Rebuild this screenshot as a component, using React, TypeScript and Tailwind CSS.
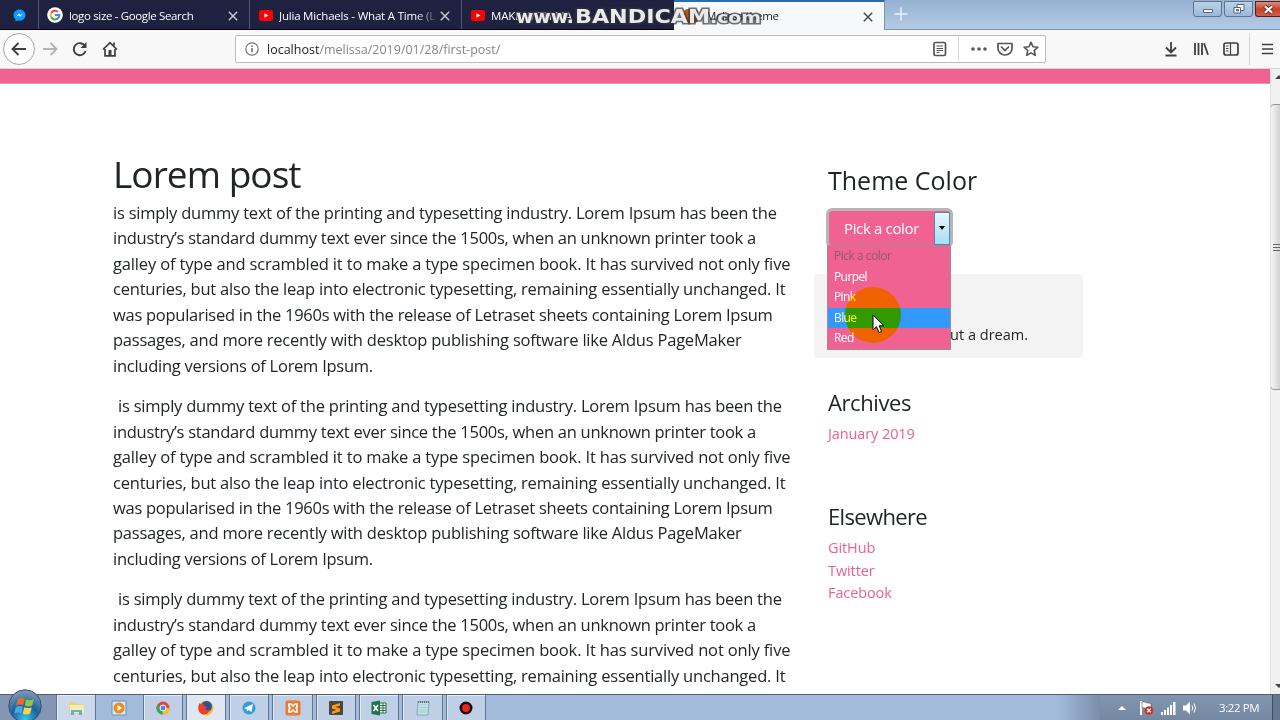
import type { ReactNode } from 'react'
import clsx from 'clsx'

const paragraph = [
  { text: 'is simply dummy text of the printing and typesetting industry. Lorem Ipsum has been the', tracking: 'tracking-[-0.223px]' },
  { text: 'industry’s standard dummy text ever since the 1500s, when an unknown printer took a', tracking: 'tracking-[-0.272px]' },
  { text: 'galley of type and scrambled it to make a type specimen book. It has survived not only five', tracking: 'tracking-[-0.157px]' },
  { text: 'centuries, but also the leap into electronic typesetting, remaining essentially unchanged. It', tracking: 'tracking-[-0.213px]' },
  { text: 'was popularised in the 1960s with the release of Letraset sheets containing Lorem Ipsum', tracking: 'tracking-[-0.270px]' },
  { text: 'passages, and more recently with desktop publishing software like Aldus PageMaker', tracking: 'tracking-[-0.220px]' },
  { text: 'including versions of Lorem Ipsum.', tracking: 'tracking-[-0.260px]' },
]

const options = ['Purpel', 'Pink', 'Blue', 'Red']

function YoutubeIcon() {
  return (
    <svg width="14" height="11" viewBox="0 0 14 11" className="mt-0.5 shrink-0">
      <rect width="14" height="11" rx="2.5" fill="#f00" />
      <path d="M5.4 3.2v4.6l4-2.3z" fill="#fff" />
    </svg>
  )
}

function GoogleIcon() {
  return (
    <svg width="16" height="16" viewBox="0 0 16 16" className="mt-px shrink-0">
      <circle cx="8" cy="8" r="7.8" fill="#fff" />
      <g fill="none" strokeWidth="2">
        <path d="M4.2 5.8A4.4 4.4 0 0 1 11 4.9" stroke="#ea4335" />
        <path d="M4.2 10.2a4.6 4.6 0 0 1 0-4.4" stroke="#fbbc05" />
        <path d="M11 11.3a4.4 4.4 0 0 1-6.8-1.1" stroke="#34a853" />
        <path d="M8 8h4.4a4.4 4.4 0 0 1-1.4 3.3" stroke="#4285f4" />
      </g>
    </svg>
  )
}

function MessengerIcon() {
  return (
    <svg width="13" height="13" viewBox="0 0 13 13">
      <path d="M6.5.4C3 .4.5 2.9.5 6c0 1.8.8 3.3 2 4.3v2.300l2-1.100c.6.2 1.300.3 2 .3 3.500 0 6-2.500 6-5.700S10 .4 6.500.4z" fill="#0a9cff" />
      <path d="M2.900 7.700 5.900 4.600l1.500 1.500 2.700-1.500L7.200 7.700 5.600 6.200z" fill="#fff" />
    </svg>
  )
}

function CloseIcon({ className }: { className?: string }) {
  return (
    <svg width="10" height="10" viewBox="0 0 10 10" className={clsx('mt-0.5 shrink-0', className)}>
      <path d="M.8.8l8.400 8.400M9.200.8L.8 9.200" stroke="currentColor" strokeWidth="1.400" fill="none" />
    </svg>
  )
}

function Tab({ icon, title, className }: { icon: ReactNode; title: string; className: string }) {
  return (
    <div className={clsx('flex items-center border-r border-[#4f5478] pr-[11px] text-white', className)}>
      {icon}
      <span className="mt-0.5 ml-1.5 flex-1 text-[11.5px] tracking-[-0.35px] whitespace-nowrap">{title}</span>
      <CloseIcon className="text-[#c9cad6]" />
    </div>
  )
}

function TabBar() {
  return (
    <div className="relative flex h-[30px] bg-linear-to-b from-[#96b1d1] to-[#b4cce6]">
      <div className="flex w-[674px] border-b border-black bg-[#1e2140]">
        <div className="flex w-[39px] items-center justify-center border-r border-[#4f5478] pt-0.5">
          <MessengerIcon />
        </div>
        <Tab icon={<GoogleIcon />} title="logo size - Google Search" className="w-[211px] pl-2" />
        <Tab
          icon={<YoutubeIcon />}
          title="Julia Michaels - What A Time (L"
          className="w-[212px] pl-[9px] [&>span]:mask-r-from-85% [&>span]:tracking-[-0.2px]"
        />
        <div className="flex flex-1 items-center pl-[9px] text-white">
          <YoutubeIcon />
          <span className="mt-0.5 ml-1.5 text-[11.5px] tracking-[-0.2px] whitespace-nowrap">MAKE WITH MA</span>
        </div>
      </div>
      <div className="flex w-[211px] items-center border-t-2 border-r border-t-[#2b6cb5] border-r-[#7d93b0] bg-[#f7f8f9] pr-[11px] pl-2.5">
        <div className="size-3.5 rounded bg-[#b5561c]" />
        <span className="ml-2 flex-1 text-[11.5px] tracking-[-0.4px] text-[#222]">Melissa theme</span>
        <CloseIcon className="mt-0 text-[#444]" />
      </div>
      <div className="flex flex-1 border-b border-[#7f93ac]">
        <svg width="14" height="14" viewBox="0 0 14 14" className="mt-[7px] ml-[9px]">
          <path d="M7 .5v13M.5 7h13" stroke="#e8f1fa" strokeWidth="1.500" />
        </svg>
        <WindowButtons />
      </div>
      <Watermark />
    </div>
  )
}

function WindowButtons() {
  return (
    <div className="ml-auto flex gap-[2px] overflow-hidden pt-px">
      <div className="flex h-4 w-[29px] items-center justify-center rounded-b-[3px] border border-[#5c7391] bg-linear-to-b from-[#bdd1e8] to-[#9bb8d8]">
        <div className="mt-1 h-[4px] w-[10px] rounded-[1px] border border-[#56657a] bg-white" />
      </div>
      <div className="flex h-4 w-[29px] items-center justify-center rounded-b-[3px] border border-[#5c7391] bg-linear-to-b from-[#bdd1e8] to-[#9bb8d8]">
        <svg width="12" height="10" viewBox="0 0 12 10">
          <path d="M4 .5h7v6H4z" fill="#fff" stroke="#56657a" />
          <path d="M1 3.500h6.500v5.500H1z" fill="#fff" stroke="#56657a" />
          <path d="M3.500 5.500h2v1.500h-2z" fill="#9bb8d8" stroke="#56657a" />
        </svg>
      </div>
      <div className="flex h-4 w-[25px] items-center justify-center rounded-bl-[3px] border border-r-0 border-[#5a1d18] bg-linear-to-b from-[#dc8b7d] via-[#c7432b] to-[#cf5f43]">
        <svg width="11" height="9" viewBox="0 0 11 9">
          <path d="M1.500 1 9.500 8M9.500 1 1.500 8" stroke="#59302e" strokeWidth="3.800" />
          <path d="M1.800 1.200 9.200 7.800M9.200 1.200 1.800 7.800" stroke="#fff" strokeWidth="2.200" />
        </svg>
      </div>
    </div>
  )
}

// Recorder watermark, drawn over the tabs
function Watermark() {
  return (
    <svg width="260" height="30" className="absolute top-0 left-[510px]">
      <g
        fontFamily="'DejaVu Sans', sans-serif"
        fontWeight="bold"
        fill="#e9e9eb"
        stroke="#33353b"
        strokeWidth="3"
        strokeOpacity=".7"
        paintOrder="stroke"
      >
        <text x="6" y="22.500" fontSize="18" textLength="58" lengthAdjust="spacingAndGlyphs">www.</text>
        <text x="65" y="22.500" fontSize="19" textLength="135" lengthAdjust="spacingAndGlyphs">BANDICAM</text>
        <text x="200" y="22.500" fontSize="16" textLength="51" lengthAdjust="spacingAndGlyphs">.com</text>
      </g>
    </svg>
  )
}

function Toolbar() {
  return (
    <div className="flex h-[39px] items-center border-b border-[#d5d5d5] bg-[#f8f8f9] text-[#3f3f42]">
      <div className="ml-[3px] flex size-8 shrink-0 items-center justify-center rounded-full border border-[#a9a9ab] bg-[#fdfdfd]">
        <svg width="16" height="14" viewBox="0 0 16 14" fill="none" stroke="currentColor" strokeWidth="1.900">
          <path d="M15 7H2M7.500 1 1.500 7l6 6" />
        </svg>
      </div>
      <svg width="16" height="14" viewBox="0 0 16 14" fill="none" stroke="#b3b3b5" strokeWidth="1.800" className="ml-[7px]">
        <path d="M1 7h13M8.500 1l6 6-6 6" />
      </svg>
      <svg width="16" height="16" viewBox="0 0 16 16" fill="none" stroke="currentColor" strokeWidth="1.900" className="ml-3.5">
        <path d="M13 5.200A6 6 0 1 0 13.500 10" />
        <path d="M14.500 1v6H8.500z" fill="currentColor" stroke="none" />
      </svg>
      <svg width="16" height="16" viewBox="0 0 16 16" fill="none" stroke="currentColor" strokeWidth="1.700" className="ml-3.5">
        <path d="M1 8.500 8 1.600l7 6.900M3 8v6.800h10V8M12 1.500v3" />
        <path d="M6.500 9h3v6h-3z" fill="currentColor" stroke="none" />
      </svg>
      <div className="ml-[117px] flex h-7 w-[811px] items-center rounded-[2px] border border-[#bcbcbc] bg-white">
        <svg width="14" height="14" viewBox="0 0 14 14" fill="none" stroke="#737375" strokeWidth="1.200" className="ml-[9px]">
          <circle cx="7" cy="7" r="6.200" />
          <path d="M7 6v4.200M7 3.500v1.400" strokeWidth="1.600" />
        </svg>
        <div className="mt-0.5 ml-2 text-[12.5px] text-[#858587]">
          <span className="text-[#222]">localhost</span>/melissa/2019/01/28/first-post/
        </div>
        <svg width="14" height="16" viewBox="0 0 14 16" fill="none" stroke="#555" className="ml-auto">
          <rect x="1" y="1.500" width="11.500" height="13" rx="1.500" strokeWidth="1.700" />
          <path d="M3.500 5h6.500M3.500 7.500h6.500M3.500 9.500h6.500M3.500 11.500h3" />
        </svg>
        <div className="ml-[11px] h-6 w-px bg-[#d8d8d8]" />
        <svg width="16" height="4" viewBox="0 0 16 4" fill="#555" className="ml-3">
          <circle cx="2" cy="2" r="1.800" />
          <circle cx="8" cy="2" r="1.800" />
          <circle cx="14" cy="2" r="1.800" />
        </svg>
        <svg width="16" height="14" viewBox="0 0 16 14" fill="none" stroke="#555" strokeWidth="1.700" className="ml-2.5">
          <path d="M1 1.500h14V6.500a7 6.500 0 0 1-14 0z" strokeLinejoin="round" />
          <path d="M4.500 5 8 8.500 11.500 5" strokeLinecap="round" />
        </svg>
        <svg width="16" height="16" viewBox="0 0 16 16" fill="none" stroke="#555" strokeWidth="1.600" strokeLinejoin="round" className="mr-[6px] ml-[10px]">
          <path d="M8 1.200l2 4.500 4.900.5-3.700 3.300 1.100 4.900L8 11.900l-4.300 2.500 1.100-4.900L1.100 6.200 6 5.700z" />
        </svg>
      </div>
      <svg width="14" height="16" viewBox="0 0 14 16" fill="none" stroke="currentColor" strokeWidth="1.800" className="ml-[118px]">
        <path d="M7 1v10M2 6.500l5 5 5-5M1.500 14.500h11" />
      </svg>
      <svg width="16" height="14" viewBox="0 0 16 14" fill="none" stroke="currentColor" strokeWidth="1.800" className="ml-[15px]">
        <path d="M2 1v12M5.500 1v12M9 1v12M11 1.200l4 11.600" />
      </svg>
      <svg width="16" height="14" viewBox="0 0 16 14" fill="none" stroke="currentColor" strokeWidth="1.700" className="ml-3.5">
        <rect x="1" y="1" width="14" height="12" rx="2" />
        <path d="M7.500 1v12M3 4h2.500M3 6.500h2.500M3 9h2.500" strokeWidth="1.200" />
      </svg>
      <div className="ml-[10px] h-8 w-px bg-[#d5d5d7]" />
      <svg width="12" height="12" viewBox="0 0 12 12" fill="none" stroke="currentColor" strokeWidth="1.700" className="ml-3">
        <path d="M0 1.500h11M0 6h11M0 10.500h11" />
      </svg>
    </div>
  )
}

function Post() {
  return (
    <article className="ml-[113px] w-[715px] pt-[67px] text-[#212529]">
      <h1 className="mb-[3px] text-[37px] leading-[46px] tracking-[-0.95px]">Lorem post</h1>
      {[0, 1, 2].map((n) => (
        <p key={n} className={clsx('mb-[15px] text-[16.5px] leading-[25.450px] whitespace-nowrap', n > 0 && 'first-line:indent-1')}>
          {paragraph.map((line, i) => (
            <span key={line.text} className={clsx('block', line.tracking, n > 0 && i === 0 && 'pl-[5px]')}>
              {line.text}
            </span>
          ))}
        </p>
      ))}
    </article>
  )
}

function ColorPicker() {
  return (
    <div className="relative mt-3 ml-[-2px] w-[127px]">
      <div className="flex h-10 items-center rounded-[6px] border-[3px] border-[#b9b4b7] bg-[#f06292] text-[15px] text-white">
        <span className="ml-[15px] flex-1 tracking-[-0.35px] whitespace-nowrap">Pick a color</span>
        <div className="flex h-[33px] w-4 items-center justify-center border border-[#4d8ca9] bg-linear-to-b from-[#eaf6fd] to-[#aadcf3]">
          <div className="border-x-[3.500px] border-t-4 border-x-transparent border-t-black" />
        </div>
      </div>
      <ul className="absolute top-[37px] left-px z-10 w-[124px] border border-[#a58a95] bg-[#f06292] text-[12px] leading-[20.600px] font-medium tracking-[-0.6px] text-white">
        <li className="pl-1.5 font-normal tracking-[-0.5px] text-[#8f5a6c]">Pick a color</li>
        {options.map((name) => (
          <li key={name} className={clsx('pl-1.5', name === 'Blue' && 'bg-[#3399ff]')}>{name}</li>
        ))}
      </ul>
      {/* click highlight and pointer */}
      <div className="absolute top-[79px] left-[19px] z-20 size-[56px] rounded-full bg-[#ffff00] mix-blend-multiply" />
      <svg width="13" height="20" viewBox="0 0 13 20" className="absolute top-[106px] left-[46px] z-20">
        <path d="M1 1v15l3.500-3.300L7 18.500l2.600-1.100-2.500-5.600H12z" fill="#fff" stroke="#000" />
      </svg>
    </div>
  )
}

function Sidebar() {
  return (
    <aside className="pt-20 text-[#212529]">
      <h4 className="text-[25px] leading-[32px]">Theme Color</h4>
      <ColorPicker />
      <div className="mt-[26px] ml-[-14px] h-[84px] w-[269px] rounded bg-[#f3f3f3] pt-[49px] pr-[55px] text-right text-[14.5px] leading-6 whitespace-nowrap">
        but a dream.
      </div>
      <h4 className="mt-7 text-[22px] leading-8 tracking-[-0.4px]">Archives</h4>
      <a className="mt-[4px] block text-[14.5px] leading-[23px] tracking-[-0.1px] text-[#e9618f]">January 2019</a>
      <h4 className="mt-[55px] text-[22px] leading-8 tracking-[-0.65px]">Elsewhere</h4>
      <ul className="mt-[5px] text-[14.5px] leading-[22.600px] tracking-[-0.1px] text-[#e9618f]">
        <li>GitHub</li>
        <li>Twitter</li>
        <li>Facebook</li>
      </ul>
    </aside>
  )
}

function Scrollbar() {
  return (
    <div className="flex w-[10px] flex-col items-center overflow-hidden border-l border-[#e2e2e2] bg-[#f0f0f0]">
      <div className="mt-1.5 ml-1.5 shrink-0 border-x-4 border-b-4 border-x-transparent border-b-[#444]" />
      <div className="mt-[25px] ml-px flex h-[286px] w-3 shrink-0 flex-col items-end justify-center gap-0.5 rounded-l-sm border border-[#979797] bg-linear-to-r from-[#f6f6f6] to-[#cfcfd2]">
        <div className="h-px w-2 bg-[#666]" />
        <div className="h-px w-2 bg-[#666]" />
        <div className="h-px w-2 bg-[#666]" />
      </div>
      <div className="mt-auto mb-1.5 ml-1.5 shrink-0 border-x-4 border-t-4 border-x-transparent border-t-[#444]" />
    </div>
  )
}

const apps: { name: string; className: string; icon: ReactNode }[] = [
  {
    name: 'explorer',
    className: 'bg-white/45',
    icon: (
      <>
        <path d="M2 3h6l1 2h7v10H2z" fill="#e9d277" />
        <path d="M3 6h14v8H3z" fill="#f7ecae" />
        <path d="M4 16v-5h11v5h-3v-3H7v3z" fill="#58b4dd" />
      </>
    ),
  },
  {
    name: 'media player',
    className: 'border-x-transparent shadow-none',
    icon: (
      <>
        <path d="M2 2h14v14H2z" fill="#d5e8f5" stroke="#6292ba" />
        <circle cx="9" cy="9" r="5.500" fill="#f28a17" />
        <path d="M7.500 6v6l4.500-3z" fill="#fff" />
      </>
    ),
  },
  {
    name: 'chrome',
    className: 'bg-white/30',
    icon: (
      <>
        <circle cx="9" cy="9" r="6.500" fill="#e7453a" />
        <path d="M9 9 3.400 5.700A6.500 6.500 0 0 0 8.500 15.500z" fill="#33a852" />
        <path d="M9 9h6.500a6.500 6.500 0 0 1-7 6.500z" fill="#fbc20a" />
        <circle cx="9" cy="9" r="3" fill="#4688f1" stroke="#fff" />
      </>
    ),
  },
  {
    name: 'firefox',
    className: 'bg-white/65',
    icon: (
      <>
        <circle cx="9" cy="9" r="7.500" fill="#ffbd2e" />
        <circle cx="9.500" cy="7.500" r="5.500" fill="#28529e" />
        <path d="M2.500 4 4 5.500 6.500 4.500 7 7l3 1-1.500 2c1 1.500 3 1.500 4.500.3C12.500 14 8 16.500 4.500 15 1 13 .5 8 2.500 4z" fill="#ef3d2f" />
      </>
    ),
  },
  {
    name: 'telegram',
    className: 'bg-white/30',
    icon: (
      <>
        <circle cx="9" cy="9" r="6.500" fill="#2ba0d8" />
        <path d="M4 9l9-4-1.500 8-3-2-1.500 1.500L6.500 10z" fill="#fff" />
      </>
    ),
  },
  {
    name: 'xampp',
    className: 'bg-white/30',
    icon: (
      <>
        <rect x="1.500" y="1.500" width="15" height="15" rx="2" fill="#f0782a" />
        <path d="M5 5h2l2 2 2-2h2v3l-1 1 1 1v3h-2l-2-2-2 2H5v-3l1-1-1-1z" fill="none" stroke="#fff" strokeWidth="1.700" />
      </>
    ),
  },
  {
    name: 'sublime',
    className: 'bg-white/30',
    icon: (
      <>
        <rect x="2" y="2" width="14" height="14" rx="1" fill="#474747" />
        <path d="M13 4v2.500L8.500 8l4.500 1.500v3L5 15v-2.500L9.500 11 5 9.500v-3z" fill="#ff9b0d" />
      </>
    ),
  },
  {
    name: 'excel',
    className: 'bg-white/30',
    icon: (
      <>
        <path d="M9 4h7v10H9z" fill="#fff" stroke="#1f7345" />
        <path d="M10 6.500h6M10 9h6M10 11.500h6M13 4v10" stroke="#1f7345" />
        <path d="M1.500 3 10 1.500v15L1.500 15z" fill="#1f7345" />
        <path d="M3.500 6 8 12M8 6l-4.500 6" stroke="#fff" strokeWidth="1.600" />
      </>
    ),
  },
  {
    name: 'notepad',
    className: 'bg-white/30',
    icon: (
      <>
        <path d="M4 3h11l-1 13H3z" fill="#bfe3e6" stroke="#88a7ad" />
        <path d="M5 6h8M5 8.500h8M4.500 11h8M4.500 13h8" stroke="#9fcfd4" />
        <path d="M4 3h11" stroke="#667" strokeWidth="2" strokeDasharray="1 1" />
      </>
    ),
  },
  {
    name: 'recorder',
    className: 'bg-white/30',
    icon: <circle cx="9" cy="9" r="5.200" fill="#ee2424" stroke="#160b0b" strokeWidth="2.600" />,
  },
]

function StartButton() {
  return (
    <svg width="34" height="34" viewBox="0 0 34 34" className="absolute -top-[6px] left-2">
      <defs>
        <radialGradient id="orb" cx=".5" cy=".9" r=".85">
          <stop offset="0" stopColor="#37c3ee" />
          <stop offset=".5" stopColor="#1c629e" />
          <stop offset="1" stopColor="#7c98b3" />
        </radialGradient>
      </defs>
      <circle cx="17" cy="17" r="16.200" fill="url(#orb)" stroke="#344f6d" />
      <path d="M10 10c2-1.500 4.500-1.500 6.500-.3l-1.300 6.600c-2-1.200-4.500-1.200-7 .2z" fill="#ec6a2e" />
      <path d="M18 10.500c2.500 1.200 5 1 8-.4l-1.800 6.500c-2.700 1.300-5 1.200-7.500 0z" fill="#91c748" />
      <path d="M7.800 18c2.300-1.300 5-1.300 7-.2l-1.500 6.500c-2-1-4.500-1.200-7 .2z" fill="#4fa6e0" />
      <path d="M16.300 18.300c2.500 1.200 5 1 7.500-.1L22 24.700c-2.500 1.200-5 1.200-7.200 0z" fill="#fbd14b" />
    </svg>
  )
}

function Taskbar() {
  return (
    <div className="relative flex h-[26px] border-t border-[#4f6075] bg-[#a3bbdb]">
      <div className="w-[56px] bg-[#8496b3]" />
      <StartButton />
      <div className="flex gap-[3px]">
        {apps.map((app) => (
          <div
            key={app.name}
            className={clsx(
              'flex w-[40.300px] items-center justify-center border-x pt-px',
              app.name !== 'media player' && 'border-x-[#62748f] shadow-[inset_1px_1px_0_#e1eaf5]',
              app.className,
            )}
          >
            <svg width="18" height="18" viewBox="0 0 18 18">{app.icon}</svg>
          </div>
        ))}
      </div>
      <div className="flex-1 bg-linear-to-r from-[#a3bbdb] from-93% to-[#7b8fab]" />
      <div className="flex w-[180px] items-center bg-linear-to-b from-[#8395ae] to-[#7488a4] pt-px text-white">
        <div className="ml-[18px] border-x-4 border-b-4 border-x-transparent border-b-white" />
        <svg width="15" height="16" viewBox="0 0 15 16" className="ml-[13px]">
          <path d="M2 1v14" stroke="#fff" strokeWidth="2" />
          <path d="M3 2c3-1 5 2 9 1v6c-4 1-6-2-9-1z" fill="#fff" stroke="#48566c" strokeWidth=".6" />
          <circle cx="10" cy="10.500" r="4.300" fill="#dc2c22" />
          <path d="M8.300 8.800l3.400 3.400M11.700 8.800l-3.400 3.400" stroke="#fff" strokeWidth="1.400" />
        </svg>
        <svg width="15" height="13" viewBox="0 0 15 13" fill="#fff" className="ml-[7px]">
          <path d="M0 10h2v3H0zM3 8h2v5H3zM6 5.500h2V13H6zM9 3h2v10H9zM12 0h2.500v13H12z" />
        </svg>
        <svg width="14" height="14" viewBox="0 0 14 14" className="ml-[7px]">
          <path d="M0 4.500h3L7 .5v13l-4-4H0z" fill="#fff" />
          <path d="M9 4.500q1.500 2.500 0 5M11 2.500q3 4.500 0 9" fill="none" stroke="#fff" />
        </svg>
        <span className="ml-[22px] text-[11.5px] tracking-[-0.4px] whitespace-nowrap">3:22 PM</span>
        <div className="-mt-px ml-auto h-[26px] w-[8px] border-l border-[#3d4c61] bg-[#66788f]" />
      </div>
    </div>
  )
}

export default function App() {
  return (
    <div className="flex h-[720px] w-[1280px] flex-col overflow-hidden bg-white font-['Segoe_UI','Open_Sans',sans-serif]">
      <TabBar />
      <Toolbar />
      <div className="flex min-h-0 flex-1">
        <main className="flex-1 overflow-hidden bg-white">
          <div className="h-[15px] border-b border-[#f58fb2] bg-[#f06292]" />
          <div className="flex">
            <Post />
            <Sidebar />
          </div>
        </main>
        <Scrollbar />
      </div>
      <Taskbar />
    </div>
  )
}
